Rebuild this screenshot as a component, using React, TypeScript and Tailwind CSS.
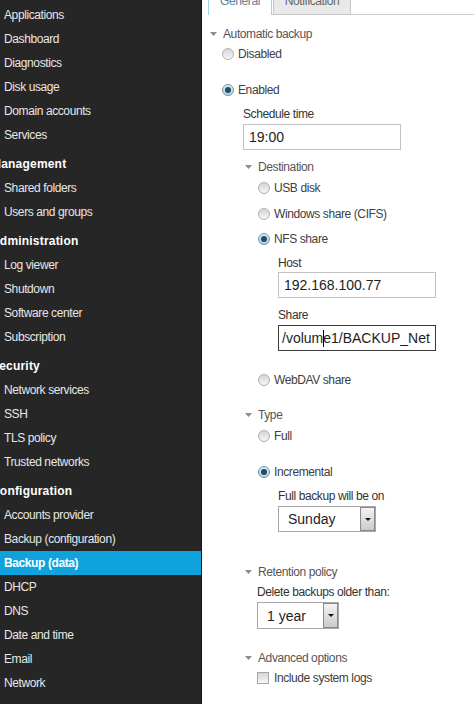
import React from "react";

type NavGroup = { header?: string; items: string[] };

const NAV: NavGroup[] = [
  {
    items: [
      "Applications",
      "Dashboard",
      "Diagnostics",
      "Disk usage",
      "Domain accounts",
      "Services",
    ],
  },
  { header: "Management", items: ["Shared folders", "Users and groups"] },
  {
    header: "Administration",
    items: ["Log viewer", "Shutdown", "Software center", "Subscription"],
  },
  {
    header: "Security",
    items: ["Network services", "SSH", "TLS policy", "Trusted networks"],
  },
  {
    header: "Configuration",
    items: [
      "Accounts provider",
      "Backup (configuration)",
      "Backup (data)",
      "DHCP",
      "DNS",
      "Date and time",
      "Email",
      "Network",
    ],
  },
];

const ACTIVE = "Backup (data)";

function Triangle() {
  return (
    <svg width="7" height="4" viewBox="0 0 7 4" className="shrink-0">
      <path d="M0 0h7L3.5 4z" fill="#8c8c8c" />
    </svg>
  );
}

function SectionTitle({ className = "", children }: { className?: string; children: React.ReactNode }) {
  return (
    <div className={`flex h-[20px] items-center gap-[6px] text-[#555] ${className}`}>
      <Triangle />
      <span>{children}</span>
    </div>
  );
}

function Radio({ checked }: { checked?: boolean }) {
  return (
    <span
      className={[
        "flex h-[12px] w-[12px] shrink-0 items-center justify-center rounded-full border bg-linear-to-b",
        checked
          ? "border-[#6f95ad] from-[#dfeaf1] to-[#b9cfdc]"
          : "border-[#b2b2b2] from-[#d4d4d4] to-[#f8f8f8]",
      ].join(" ")}
    >
      {checked && <span className="h-[6px] w-[6px] rounded-full bg-[#1b4f66]" />}
    </span>
  );
}

function RadioRow({ className = "", checked, label }: { className?: string; checked?: boolean; label: string }) {
  return (
    <div className={`flex h-[20px] items-center gap-[4px] text-[#404040] ${className}`}>
      <Radio checked={checked} />
      <span>{label}</span>
    </div>
  );
}

function Label({ className = "", children }: { className?: string; children: React.ReactNode }) {
  return <div className={`flex h-[18px] items-center text-[#333] ${className}`}>{children}</div>;
}

function TextInput({
  className = "",
  focused,
  children,
}: {
  className?: string;
  focused?: boolean;
  children: React.ReactNode;
}) {
  return (
    <div
      className={[
        "flex h-[26px] items-center overflow-hidden whitespace-nowrap border bg-white text-[14px] tracking-normal text-[#1e1e1e]",
        focused ? "border-[#3a3a3a] pl-[3px]" : "border-[#c3c3c3] pl-[5px]",
        className,
      ].join(" ")}
    >
      {children}
    </div>
  );
}

function Select({ className = "", value }: { className?: string; value: string }) {
  return (
    <div className={`flex border border-[#a8a8a8] bg-white tracking-normal ${className}`}>
      <span className="flex flex-1 items-center pl-[9px] text-[14px] text-[#1e1e1e]">{value}</span>
      <span className="flex w-[15px] items-center justify-center border border-[#8a8a8a] bg-linear-to-b from-[#f3f3f3] to-[#cbcbcb]">
        <svg width="6" height="3" viewBox="0 0 6 3">
          <path d="M0 0h6L3 3z" fill="#111" />
        </svg>
      </span>
    </div>
  );
}

export default function App() {
  return (
    <div className="flex h-[704px] w-[474px] overflow-hidden bg-white font-['Liberation_Sans',Arial,sans-serif] text-[12px] leading-[14px] tracking-[-0.4px]">
      <nav className="w-[202px] shrink-0 overflow-hidden border-r border-[#141414] bg-[#262626] pt-[3px] text-[#e6e6e6]">
        {NAV.map((group, gi) => (
          <div key={gi}>
            {group.header && (
              <div className="-ml-[9px] h-[29px] whitespace-nowrap pt-[10px] font-bold tracking-[0.2px] text-white">
                {group.header}
              </div>
            )}
            {group.items.map((item) => (
              <div
                key={item}
                className={[
                  "flex h-[24px] items-center whitespace-nowrap pl-[4px]",
                  item === ACTIVE ? "bg-[#0fa2dc] font-bold text-white" : "",
                ].join(" ")}
              >
                {item}
              </div>
            ))}
          </div>
        ))}
      </nav>

      <main className="min-w-0 flex-1">
        {/* tab strip, scrolled so the labels sit half above the top edge */}
        <div className="flex h-[15px]">
          <div className="w-[6px]" />
          <div className="flex h-full w-[64px] justify-center overflow-visible border-x border-[#a4cfe9] bg-white text-[#66808f]">
            <span className="-mt-[6px]">General</span>
          </div>
          <div className="w-[1px] border-b border-[#cfcfcf]" />
          <div className="flex h-full w-[78px] justify-center border border-t-0 border-[#c6c6c6] bg-[#e9e9e9] text-[#666]">
            <span className="-mt-[6px]">Notification</span>
          </div>
          <div className="flex-1 border-b border-[#cfcfcf]" />
        </div>

        <div className="flex flex-col">
          <SectionTitle className="ml-[8px] mt-[9px]">Automatic backup</SectionTitle>
          <RadioRow className="ml-[20px]" label="Disabled" />
          <RadioRow className="ml-[20px] mt-[16px]" checked label="Enabled" />
          <Label className="ml-[41px] mt-[5px]">Schedule time</Label>
          <TextInput className="ml-[41px] mt-[1px] w-[158px]">19:00</TextInput>

          <SectionTitle className="ml-[43px] mt-[7px]">Destination</SectionTitle>
          <RadioRow className="ml-[56px] mt-[1px]" label="USB disk" />
          <RadioRow className="ml-[56px] mt-[6px]" label="Windows share (CIFS)" />
          <RadioRow className="ml-[56px] mt-[5px]" checked label="NFS share" />
          <Label className="ml-[76px] mt-[5px]">Host</Label>
          <TextInput className="ml-[76px] w-[158px]">192.168.100.77</TextInput>
          <Label className="ml-[76px] mt-[8px]">Share</Label>
          <TextInput className="ml-[76px] mt-[1px] w-[158px]" focused>
            /volum
            <span className="-mr-px inline-block h-[17px] w-px bg-black" />
            e1/BACKUP_Net
          </TextInput>
          <RadioRow className="ml-[56px] mt-[19px]" label="WebDAV share" />

          <SectionTitle className="ml-[43px] mt-[15px]">Type</SectionTitle>
          <RadioRow className="ml-[56px] mt-[1px]" label="Full" />
          <RadioRow className="ml-[56px] mt-[16px]" checked label="Incremental" />
          <Label className="ml-[76px] mt-[5px]">Full backup will be on</Label>
          <Select className="ml-[76px] mt-[1px] h-[26px] w-[98px]" value="Sunday" />

          <SectionTitle className="ml-[43px] mt-[30px]">Retention policy</SectionTitle>
          <Label className="ml-[55px] mt-[1px]">Delete backups older than:</Label>
          <Select className="ml-[55px] mt-[1px] h-[27px] w-[82px]" value="1 year" />

          <SectionTitle className="ml-[43px] mt-[19px]">Advanced options</SectionTitle>
          <div className="ml-[55px] flex h-[20px] items-center gap-[5px] text-[#404040]">
            <span className="h-[12px] w-[12px] shrink-0 border border-[#a6a6a6] bg-linear-to-b from-[#d6d6d6] to-[#f7f7f7]" />
            <span>Include system logs</span>
          </div>
        </div>
      </main>
    </div>
  );
}
